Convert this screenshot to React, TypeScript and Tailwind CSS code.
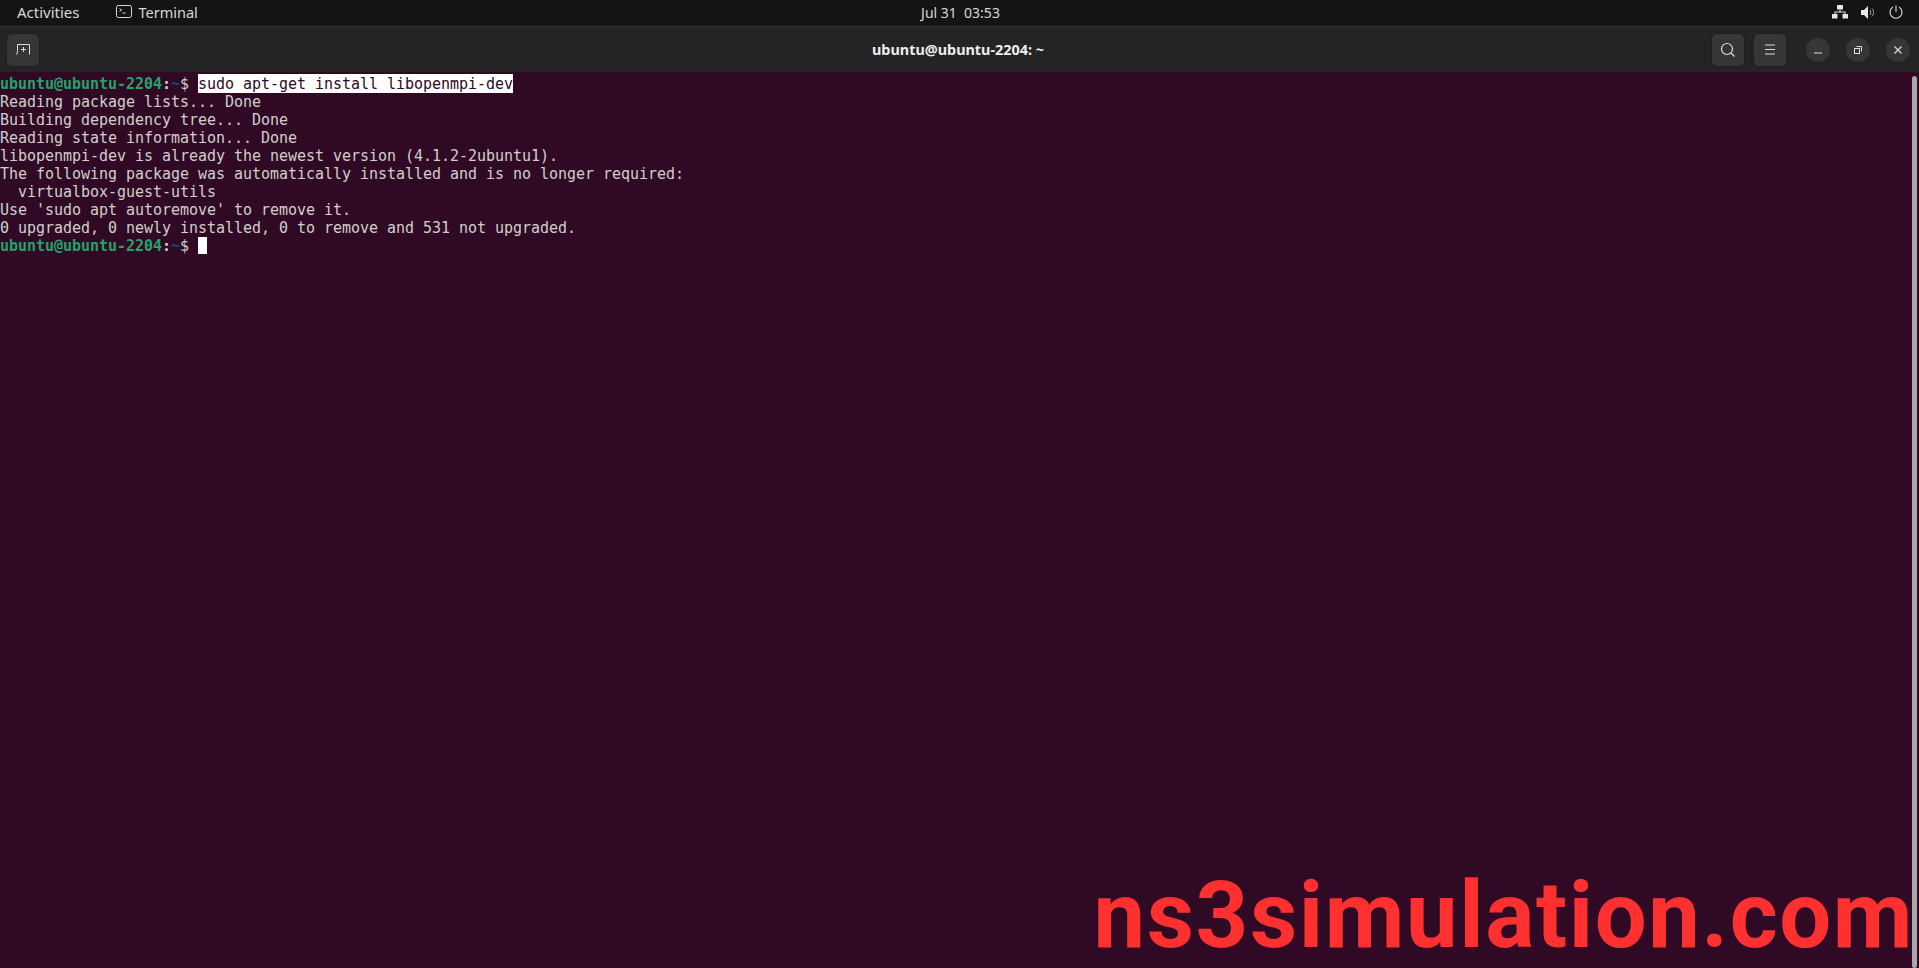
import React from "react";

const mono = "font-['DejaVu_Sans_Mono','Liberation_Mono',monospace]";

function Prompt() {
  return (
    <>
      <span className="font-bold text-[#26a269]">ubuntu@ubuntu-2204</span>
      <span className="font-bold text-[#d0cfcc]">:</span>
      <span className="font-bold text-[#12488b]">~</span>
      <span>$ </span>
    </>
  );
}

const lines = [
  "Reading package lists... Done",
  "Building dependency tree... Done",
  "Reading state information... Done",
  "libopenmpi-dev is already the newest version (4.1.2-2ubuntu1).",
  "The following package was automatically installed and is no longer required:",
  "  virtualbox-guest-utils",
  "Use 'sudo apt autoremove' to remove it.",
  "0 upgraded, 0 newly installed, 0 to remove and 531 not upgraded.",
];

function HeaderButton({ children }: { children: React.ReactNode }) {
  return (
    <div className="flex h-[34px] w-[34px] items-center justify-center rounded-[6px] border border-[#1f1f1f] bg-[#363636]">
      {children}
    </div>
  );
}

function WindowButton({ children }: { children: React.ReactNode }) {
  return (
    <div className="flex h-6 w-6 items-center justify-center rounded-full bg-[#363636]">{children}</div>
  );
}

export default function App() {
  return (
    <div className="flex h-[968px] w-[1919px] flex-col overflow-hidden bg-[#300a24] font-['Noto_Sans',sans-serif]">
      <div className="grid h-[26px] grid-cols-3 items-center bg-[#141414] pb-[2px] text-[15px] text-[#d8d8d8]">
        <div className="flex items-center">
          <span className="ml-[17px]">Activities</span>
          <svg className="ml-9" width="16" height="14" viewBox="0 0 16 14" fill="none" stroke="#d8d8d8">
            <rect x="0.5" y="0.5" width="15" height="12" rx="2" />
            <path d="M3.5 3.5l2 1.5-2 1.5M6.5 8h3" />
          </svg>
          <span className="ml-[7px] pt-[1px] text-[14.500px]">Terminal</span>
        </div>
        <div className="flex justify-center">
          <span className="ml-[2px] text-[14px]">Jul 31&nbsp;&nbsp;03:53</span>
        </div>
        <div className="flex items-center justify-end pr-[16px]">
          <svg width="16" height="14" viewBox="0 0 16 14" fill="#e8e8e8">
            <rect x="5" y="0" width="6" height="4.5" rx="0.5" />
            <rect x="0" y="9" width="5.5" height="4.5" rx="0.5" />
            <rect x="10.5" y="9" width="5.5" height="4.5" rx="0.5" />
            <path d="M7.5 4.5h1v2h5v3h-1v-2h-9v2h-1v-3h5z" />
          </svg>
          <svg className="ml-[13px]" width="15" height="15" viewBox="0 0 15 15" fill="none">
            <path d="M0 5h3l4-4v13l-4-4H0z" fill="#e8e8e8" />
            <path d="M9 5c1 1 1 4 0 5M11 3.500c2 2 2 6 0 8" stroke="#a8a8a8" />
          </svg>
          <svg className="ml-[13px]" width="14" height="14" viewBox="0 0 14 14" fill="none" stroke="#e0e0e0" strokeWidth="1.1">
            <path d="M7 0.500v6.500M4 2a6 6 0 1 0 6 0" />
          </svg>
        </div>
      </div>

      <div className="flex h-[46px] items-center border-t border-[#303030] bg-[#242424] pl-[6px] pr-[9px]">
        <div className="flex flex-1">
          <HeaderButton>
            <svg width="15" height="11" viewBox="0 0 15 11" fill="none" stroke="#dcdcdc">
              <path d="M0.500 10.500q1-1 1-4v-6h12v10M7.500 3v5M5 5.500h5" />
            </svg>
          </HeaderButton>
        </div>
        <div className="text-center text-[14.400px] font-bold text-[#eeeeee]">ubuntu@ubuntu-2204: ~</div>
        <div className="flex flex-1 items-center justify-end">
          <HeaderButton>
            <svg width="16" height="16" viewBox="0 0 16 16" fill="none" stroke="#dcdcdc" strokeWidth="1.200">
              <circle cx="7" cy="7" r="5.500" />
              <path d="M11 11l3.500 3.500" />
            </svg>
          </HeaderButton>
          <div className="ml-2">
            <HeaderButton>
              <svg width="12" height="11" viewBox="0 0 12 11" fill="none" stroke="#dcdcdc">
                <path d="M1 1h10M1 5.500h10M1 10h10" />
              </svg>
            </HeaderButton>
          </div>
          <div className="ml-[19px] flex items-center gap-4">
            <WindowButton>
              <svg width="8" height="8" viewBox="0 0 8 8" stroke="#dcdcdc"><path d="M0 7h8" /></svg>
            </WindowButton>
            <WindowButton>
              <svg width="8" height="8" viewBox="0 0 8 8" fill="none" stroke="#dcdcdc">
                <rect x="0.500" y="2.500" width="5" height="5" />
                <path d="M2.500 0.500h5v5" />
              </svg>
            </WindowButton>
            <WindowButton>
              <svg width="8" height="8" viewBox="0 0 8 8" stroke="#dcdcdc" strokeWidth="1.200"><path d="M0.500 0.500l7 7M7.500 0.500l-7 7" /></svg>
            </WindowButton>
          </div>
        </div>
      </div>

      <div className="relative flex-1">
        <div className={`${mono} whitespace-pre pt-[3px] text-[15px] leading-[18px] tracking-[-0.03px] text-[#d0cfcc]`}>
          <div className="h-[18px]"><Prompt /><span className="bg-white pt-[1px] text-[#300a24]">sudo apt-get install libopenmpi-dev</span></div>
          {lines.map((l) => (
            <div key={l} className="h-[18px]">{l}</div>
          ))}
          <div className="flex h-[18px]"><Prompt /><span className="h-[17px] w-[9px] bg-white" /></div>
        </div>
        <div className="absolute bottom-0 right-[2px] top-[4px] w-[5px] rounded-full bg-[#a8a8a8]" />
        <div className="absolute bottom-[2px] right-[5px] whitespace-nowrap font-['Roboto',sans-serif] text-[92px] font-bold leading-[1.1] tracking-[1.6px] text-[#ff3030]">
          ns3simulation.com
        </div>
      </div>
    </div>
  );
}
